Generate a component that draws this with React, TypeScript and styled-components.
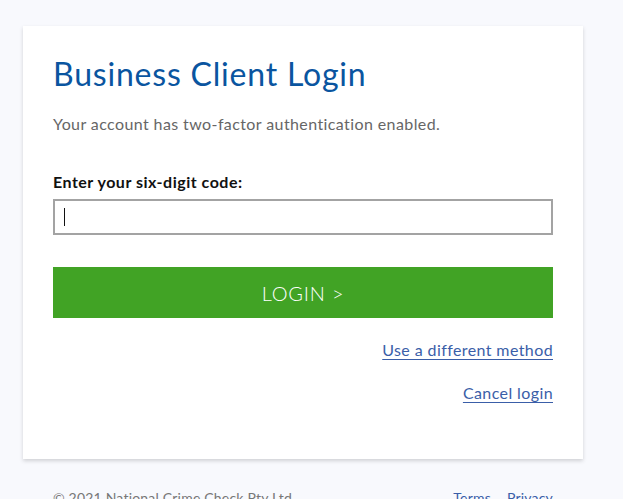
import React from "react";
import styled, { createGlobalStyle } from "styled-components";

const Global = createGlobalStyle`
  html, body { margin: 0; padding: 0; background: #f8f9fd; }
  body { font-family: Lato, "Open Sans", sans-serif; overflow: hidden; }
  * { box-sizing: border-box; }
`;

const Page = styled.div`
  padding: 26px 40px 0 23px;
  width: 623px;
`;

const Card = styled.div`
  background: #fff;
  padding: 30px 30px 54px;
  box-shadow: 0 2px 4px rgba(0, 0, 0, 0.16);
`;

const Title = styled.h1`
  margin: 0;
  font-size: 32px;
  line-height: 36px;
  font-weight: 400;
  color: #0a55a0;
  letter-spacing: 0.8px;
`;

const Sub = styled.p`
  margin: 20px 0 0;
  font-size: 16px;
  line-height: 24px;
  color: #666;
  letter-spacing: 0.4px;
`;

const Label = styled.label`
  display: block;
  margin-top: 36px;
  font-size: 16px;
  line-height: 20px;
  font-weight: 700;
  color: #111;
  letter-spacing: 0.5px;
`;

const Input = styled.div`
  margin-top: 7px;
  height: 36px;
  border: 2px solid #a3a3a3;
  display: flex;
  align-items: center;
  padding-left: 9px;
`;

const Caret = styled.span`
  width: 1px;
  height: 18px;
  background: #111;
`;

const Button = styled.button`
  margin-top: 32px;
  width: 100%;
  height: 51px;
  border: 0;
  background: #41a325;
  color: #fff;
  font-family: inherit;
  font-size: 20px;
  font-weight: 300;
  letter-spacing: 0.8px;
`;

const Links = styled.div`
  display: flex;
  flex-direction: column;
  align-items: flex-end;
  gap: 19px;
  margin-top: 20px;
`;

const Link = styled.a`
  font-size: 16px;
  line-height: 24px;
  color: #3a5ea8;
  text-decoration: underline;
  text-underline-offset: 3px;
  letter-spacing: 0.4px;
`;

const Footer = styled.div`
  display: flex;
  justify-content: space-between;
  padding: 29px 30px 0;
  font-size: 14px;
  line-height: 20px;
  color: #777;
  letter-spacing: 0.2px;
`;

const FootLinks = styled.div`
  display: flex;
  gap: 16px;
  a { color: #3a5ea8; }
`;

export default function App() {
  return (
    <>
      <Global />
      <Page>
        <Card>
          <Title>Business Client Login</Title>
          <Sub>Your account has two-factor authentication enabled.</Sub>
          <Label>Enter your six-digit code:</Label>
          <Input>
            <Caret />
          </Input>
          <Button>LOGIN &gt;</Button>
          <Links>
            <Link>Use a different method</Link>
            <Link>Cancel login</Link>
          </Links>
        </Card>
        <Footer>
          <span>© 2021 National Crime Check Pty Ltd</span>
          <FootLinks>
            <a>Terms</a>
            <a>Privacy</a>
          </FootLinks>
        </Footer>
      </Page>
    </>
  );
}
